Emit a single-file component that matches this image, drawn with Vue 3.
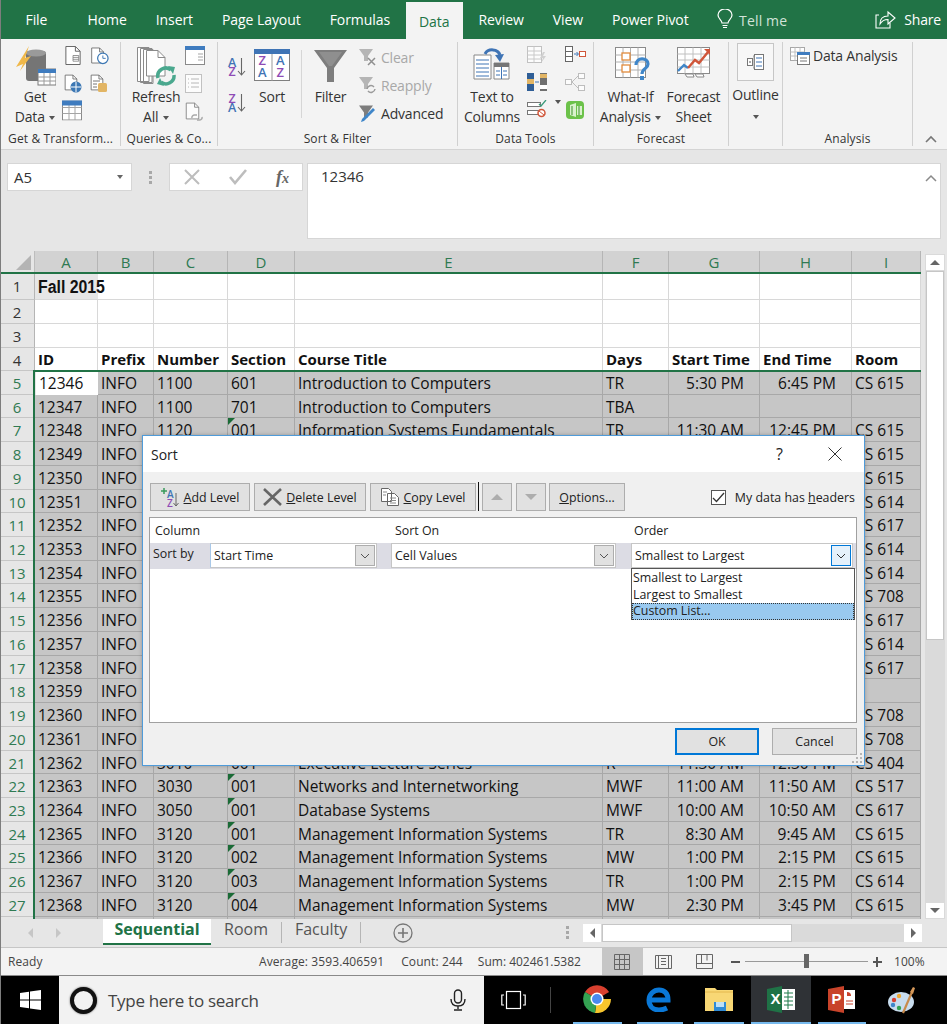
<template>
  <div class="app">
    <svg width="0" height="0" class="defs">
      <symbol id="doc" viewBox="0 0 18 20">
        <path d="M1.5 .5h10l5 5v14h-15z" fill="#fff" stroke="#5f5f5f" />
        <path d="M11.5 .5v5h5" fill="none" stroke="#5f5f5f" />
      </symbol>
      <symbol id="funnel" viewBox="0 0 18 18">
        <path d="M1 1h14l-5 7v5h-4v-5z" fill="currentColor" />
      </symbol>
      <symbol id="minitable" viewBox="0 0 20 20">
        <rect x=".5" y=".5" width="19" height="19" fill="#fff" stroke="#8a8a8a" />
        <path d="M.5 7h19M.5 13h19M7 .5v19M13 .5v19" stroke="#a5a5a5" fill="none" />
      </symbol>
    </svg>

    <!-- title / tabs -->
    <header class="tabs">
      <span class="tab file">File</span>
      <span class="tab">Home</span>
      <span class="tab">Insert</span>
      <span class="tab">Page Layout</span>
      <span class="tab">Formulas</span>
      <span class="tab active">Data</span>
      <span class="tab">Review</span>
      <span class="tab">View</span>
      <span class="tab">Power Pivot</span>
      <svg class="bulb" width="16" height="21" viewBox="0 0 16 21" fill="none" stroke="#fff" stroke-width="1.2">
        <path d="M5 14c0-3-4-4-4-8a7 6 0 0 1 14 0c0 4-4 5-4 8z" />
        <path d="M5.5 16.500h5M6 18.500h4" />
      </svg>
      <span class="tell">Tell me</span>
      <svg class="share-ic" width="21" height="19" viewBox="0 0 21 19" fill="none" stroke="#fff" stroke-width="1.1">
        <path d="M4 5H1v13h14v-5" />
        <path d="M5 14c0-5 3-8 8-8V2l7 6-7 6V9.500c-3 0-6 1-8 4.500z" />
      </svg>
      <span class="share">Share</span>
    </header>

    <!-- ribbon -->
    <section class="ribbon">
      <div class="grp g1">
        <div class="grp-body">
          <div class="big w42">
            <svg width="41" height="41" viewBox="0 0 41 41">
              <rect x="11" y="5" width="20" height="30" rx="3" fill="#757575" />
              <ellipse cx="21" cy="7" rx="10" ry="3.500" fill="#9a9a9a" />
              <path d="M14 0 1 21l7-3-3 7 11-15-6 2z" fill="#f0b849" />
              <rect x="23" y="23" width="18" height="16" fill="#fff" stroke="#7a7a7a" />
              <rect x="23" y="23" width="18" height="4" fill="#3f7cbf" />
              <path d="M23 31h18M23 35h18M29 27v12M35 27v12" stroke="#9a9a9a" />
            </svg>
            <span>Get</span>
            <span>Data <i class="caret"></i></span>
          </div>
          <div class="smalls g1-smalls">
            <svg width="18" height="19" viewBox="0 0 18 20"><use href="#doc" /><path d="M9 10h6v6H9zM9 12h6M9 14h6" fill="#fff" stroke="#777" stroke-width=".8" /></svg>
            <svg width="20" height="19" viewBox="0 0 20 20"><use href="#doc" width="15" height="20" /><circle cx="13" cy="13" r="5.500" fill="#fff" stroke="#3d78b4" stroke-width="1.300" /><path d="M13 10v3h3" fill="none" stroke="#3d78b4" /></svg>
            <svg width="18" height="20" viewBox="0 0 18 20"><use href="#doc" width="14" height="19" /><circle cx="12" cy="14" r="5.500" fill="#3d78b4" /><path d="M7 14h10M12 9v10" stroke="#fff" /></svg>
            <svg width="18" height="20" viewBox="0 0 18 20"><use href="#doc" width="14" height="19" /><rect x="8" y="10" width="9" height="9" rx="1.500" fill="#e2b564" /><path d="M3 8h7M3 11h4M3 14h4" stroke="#777" /></svg>
            <svg class="tbl" width="20" height="21" viewBox="0 0 20 20"><use href="#minitable" /><rect width="20" height="5" fill="#3f7cbf" /></svg>
          </div>
        </div>
        <div class="grp-label">Get &amp; Transform...</div>
      </div>

      <div class="grp g2">
        <div class="grp-body">
          <div class="big w50">
            <svg width="41" height="41" viewBox="0 0 41 41">
              <path d="M1.500 1.500H13v34H1.500zM4.500 2.500H16v34H4.500zM7.500 3.500H17v34H7.500z" fill="#fff" stroke="#8a8a8a" />
              <path d="M10.500 4.500H22l7 7V30H10.500z" fill="#fff" stroke="#8a8a8a" />
              <path d="M22 4.500v7h7" fill="none" stroke="#8a8a8a" />
              <path d="M22 32a8 8 0 0 1 13-8M38 29a8 8 0 0 1-13 7" fill="none" stroke="#4aa88e" stroke-width="3.500" />
              <path d="M32 20l7 1-2 7zM28 40l-7-2 3-6z" fill="#4aa88e" />
            </svg>
            <span>Refresh</span>
            <span>All <i class="caret"></i></span>
          </div>
          <div class="smalls g2-smalls">
            <svg width="20" height="19" viewBox="0 0 20 19"><rect x=".5" y=".5" width="19" height="18" fill="#fff" stroke="#8a8a8a" /><rect width="20" height="4" fill="#3f7cbf" /><path d="M13 8h5M13 11h5M13 14h5" stroke="#a5a5a5" /></svg>
            <svg class="dim" width="17" height="19" viewBox="0 0 17 19"><rect x=".5" y=".5" width="16" height="18" fill="#fff" stroke="#b5b5b5" /><path d="M6 5h8M6 9h8M6 13h8M3 5h1M3 9h1M3 13h1" stroke="#a8a8a8" /></svg>
            <svg class="dim" width="18" height="20" viewBox="0 0 18 20"><use href="#doc" width="15" height="18" /><path d="M7 16a2.500 2.500 0 0 1 3-3h2M17 15a2.500 2.500 0 0 1-3 3h-2" fill="none" stroke="#999" stroke-width="1.500" /></svg>
          </div>
        </div>
        <div class="grp-label">Queries &amp; Co...</div>
      </div>

      <div class="grp g3">
        <div class="grp-body">
          <div class="sort-col">
            <svg class="letters" width="18" height="20" viewBox="0 0 18 20">
              <text class="az"><tspan x="0" y="9.500" class="blue">A</tspan><tspan x=".5" y="19" class="purple">Z</tspan></text>
              <path d="M13.500 1v17M10 14l3.500 4 3.500-4" fill="none" stroke="#666" stroke-width="1.100" />
            </svg>
            <svg class="letters" width="18" height="20" viewBox="0 0 18 20">
              <text class="az"><tspan x=".5" y="9.500" class="purple">Z</tspan><tspan x="0" y="19" class="blue">A</tspan></text>
              <path d="M13.500 1v17M10 14l3.500 4 3.500-4" fill="none" stroke="#666" stroke-width="1.100" />
            </svg>
          </div>
          <div class="big w36 sortbtn">
            <svg class="letters" width="36" height="34" viewBox="0 0 36 34">
              <rect x=".5" y=".5" width="35" height="31" fill="#fff" stroke="#7f7f7f" />
              <rect width="36" height="5" fill="#3f74b5" />
              <path d="M18 5v27" stroke="#999" />
              <text class="az2"><tspan x="4.500" y="16" class="purple">Z</tspan><tspan x="4" y="28" class="blue">A</tspan></text>
              <text class="az2"><tspan x="22" y="16" class="blue">A</tspan><tspan x="22.500" y="28" class="purple">Z</tspan></text>
            </svg>
            <span>Sort</span>
          </div>
          <div class="vsep"></div>
          <div class="big w36 filterbtn">
            <svg width="33" height="34" viewBox="0 0 33 34">
              <path d="M0 1h33L20 19v14h-7V19z" fill="#7d7d7d" />
              <path d="M5 3h23L18 17h-3z" fill="#8f8f8f" />
            </svg>
            <span>Filter</span>
          </div>
          <div class="filter-small">
            <div class="fs off">
              <svg width="18" height="18" viewBox="0 0 18 18"><use href="#funnel" /><path d="M10 10l7 7M17 10l-7 7" stroke="#8f8f8f" stroke-width="1.500" /></svg>
              <span>Clear</span>
            </div>
            <div class="fs off">
              <svg width="18" height="18" viewBox="0 0 18 18"><use href="#funnel" /><path d="M9 13a4 4 0 0 1 7-2M17 13a4 4 0 0 1-7 2" fill="none" stroke="#9a9a9a" stroke-width="1.500" /></svg>
              <span>Reapply</span>
            </div>
            <div class="fs on">
              <svg width="18" height="19" viewBox="0 0 18 19"><use href="#funnel" /><path d="M17 6L6 17l-3 1 1-3L15 4z" fill="#3f86c9" /></svg>
              <span>Advanced</span>
            </div>
          </div>
        </div>
        <div class="grp-label">Sort &amp; Filter</div>
      </div>

      <div class="grp g4">
        <div class="grp-body">
          <div class="big w58">
            <svg width="38" height="41" viewBox="0 0 38 41">
              <path d="M1 9h17v24H1z" fill="#fff" stroke="#888" />
              <path d="M3 14h13M3 18h13M3 22h13M3 26h13M3 30h13" stroke="#3f74b5" />
              <path d="M21 17h15v16H21z" fill="#fff" stroke="#888" />
              <rect x="21" y="17" width="15" height="4" fill="#777" />
              <path d="M28.500 21v12M23 25h4M23 29h4M30 25h4M30 29h4" stroke="#3f74b5" />
              <path d="M12 8a8 7 0 0 1 15 1" fill="none" stroke="#3f74b5" stroke-width="3" />
              <path d="M22 9l9-1-4 8z" fill="#3f74b5" />
            </svg>
            <span>Text to</span>
            <span>Columns</span>
          </div>
          <div class="smalls g4-smalls">
            <svg class="dim" width="20" height="18" viewBox="0 0 20 18"><rect x=".5" y=".5" width="14" height="16" fill="#fff" stroke="#b5b5b5" /><path d="M.5 5h14M.5 9h14M.5 13h14M7 .5v16" stroke="#c0c0c0" /><path d="M16 6l-3 6h3l-2 5 5-7h-3l2-4z" fill="#c8c8c8" /></svg>
            <svg width="21" height="16" viewBox="0 0 21 16"><rect x=".5" y=".5" width="7" height="15" fill="#fff" stroke="#666" /><path d="M.5 5.500h7M.5 10.500h7" stroke="#666" /><rect x="14.500" y="5.500" width="6" height="5" fill="#fff" stroke="#d0563a" /><path d="M9 8h4M11.500 6l2 2-2 2" fill="none" stroke="#3f74b5" /></svg>
            <svg width="20" height="18" viewBox="0 0 20 18"><rect width="7" height="18" fill="#2f5e96" /><rect y="6" width="7" height="5" fill="#e2b564" /><rect x="13" width="7" height="18" fill="#6f6f6f" /><rect x="13" y="1" width="7" height="4" fill="#e2b564" /><rect x="13" y="12" width="7" height="4" fill="#fff" /><path d="M8 9h4" stroke="#3f74b5" /></svg>
            <svg class="dim" width="20" height="18" viewBox="0 0 20 18"><rect x=".5" y="6.500" width="6" height="5" fill="#fff" stroke="#b0b0b0" /><rect x="13.500" y=".5" width="6" height="5" fill="#fff" stroke="#b0b0b0" /><rect x="13.500" y="12.500" width="6" height="5" fill="#fff" stroke="#b0b0b0" /><path d="M7 9l6-6M7 9l6 6" stroke="#b0b0b0" /></svg>
            <div class="valid">
              <svg width="20" height="18" viewBox="0 0 20 18"><rect x=".5" y="2.500" width="13" height="4" fill="#fff" stroke="#777" /><rect x=".5" y="10.500" width="13" height="4" fill="#fff" stroke="#777" /><path d="M12 4l2 2 5-6" fill="none" stroke="#3b9a7a" stroke-width="1.300" /><circle cx="14.500" cy="13" r="3.500" fill="#fff" stroke="#d0563a" stroke-width="1.500" /><path d="M12 11l5 4" stroke="#d0563a" /></svg>
              <i class="caret"></i>
            </div>
            <svg width="20" height="20" viewBox="0 0 20 20"><rect x="1" y="1" width="18" height="18" rx="4" fill="#6cc24a" /><path d="M5 5l6-2v14l-6-2zM12 6h5v9h-5z" fill="#d9f2cc" /><path d="M7 6v9M14 6v9" stroke="#3a8f2a" /></svg>
          </div>
        </div>
        <div class="grp-label">Data Tools</div>
      </div>

      <div class="grp g5">
        <div class="grp-body">
          <div class="big w63">
            <svg class="whatif" width="36" height="41" viewBox="0 0 36 41">
              <g transform="translate(0 1)">
                <rect x=".5" y=".5" width="30" height="30" fill="#fff" stroke="#8a8a8a" />
                <path d="M.5 8h30M.5 15h30M.5 23h30M8 .5v30M15.500 .5v30M23 .5v30" stroke="#b0b0b0" />
                <rect x="7" y="6" width="8" height="7" fill="#fff" stroke="#e08a3c" stroke-width="1.300" />
                <rect x="7" y="18" width="8" height="7" fill="#fff" stroke="#e08a3c" stroke-width="1.300" />
                <path d="M21 18c0-8 12-8 12-1 0 5-6 4-6 10" fill="none" stroke="#3f86c9" stroke-width="3.200" />
                <rect x="25" y="29" width="4" height="4" fill="#3f86c9" />
              </g>
            </svg>
            <span>What-If</span>
            <span>Analysis <i class="caret"></i></span>
          </div>
          <div class="big w55">
            <svg width="34" height="41" viewBox="0 0 34 41">
              <g transform="translate(0 1)">
                <rect x=".5" y=".5" width="32" height="26" fill="#fff" stroke="#8a8a8a" />
                <path d="M.5 7h32M.5 13h32M.5 20h32M8 .5v26M16 .5v26M24 .5v26" stroke="#c0c0c0" />
                <path d="M8 27l2 3h7l-1-3zM18 27l2 3h7l-1-3z" fill="#fff" stroke="#8a8a8a" />
                <path d="M1 24l6-6 4 3" fill="none" stroke="#3f86c9" stroke-width="2.400" />
                <path d="M11 21l7-8 4 3 9-11" fill="none" stroke="#d0563a" stroke-width="2.400" />
                <path d="M27 2h6v6z" fill="#d0563a" />
              </g>
            </svg>
            <span>Forecast</span>
            <span>Sheet</span>
          </div>
        </div>
        <div class="grp-label">Forecast</div>
      </div>

      <div class="grp g6">
        <div class="grp-body outline">
          <div class="outline-box">
            <svg width="17" height="16" viewBox="0 0 17 16"><rect x=".5" y="4.500" width="5" height="7" fill="#fff" stroke="#777" /><path d="M2 8h2" stroke="#555" /><rect x="7.500" y=".5" width="9" height="15" fill="#fff" stroke="#777" /><path d="M9 4h6M9 8h6M9 12h6" stroke="#3f74b5" /><path d="M6 2h1v12H6" fill="none" stroke="#999" /></svg>
          </div>
          <span>Outline</span>
          <i class="caret mt"></i>
        </div>
        <div class="grp-label">&nbsp;</div>
      </div>

      <div class="grp g7">
        <div class="grp-body">
          <div class="analysis">
            <svg width="20" height="18" viewBox="0 0 20 18"><rect x=".5" y=".5" width="14" height="13" fill="#fff" stroke="#a8a8a8" /><path d="M.5 5h14M.5 9h14M5 .5v13M10 .5v13" stroke="#c0c0c0" /><rect x="7.500" y="5.500" width="12" height="12" fill="#fff" stroke="#777" /><rect x="7" y="5" width="13" height="3" fill="#3f7cbf" /><path d="M10 11h7M10 14h7" stroke="#777" /></svg>
            <span>Data Analysis</span>
          </div>
        </div>
        <div class="grp-label">Analysis</div>
      </div>

      <svg class="collapse" width="12" height="8" viewBox="0 0 12 8" fill="none" stroke="#777" stroke-width="1.600"><path d="M1 7l5-5 5 5" /></svg>
    </section>

    <!-- formula bar -->
    <section class="fbar">
      <div class="namebox">
        <span>A5</span>
        <i class="caret dark"></i>
      </div>
      <div class="fdots"><i></i><i></i><i></i></div>
      <div class="fxbox">
        <svg width="16" height="16" viewBox="0 0 16 16" stroke="#bdbdbd" stroke-width="2" fill="none"><path d="M1 1l14 14M15 1L1 15" /></svg>
        <svg width="18" height="16" viewBox="0 0 18 16" stroke="#bdbdbd" stroke-width="2.600" fill="none"><path d="M1 8l5 6L17 1" /></svg>
        <span class="fx">f<small>x</small></span>
      </div>
      <div class="finput">
        <span>12346</span>
        <svg class="fchev" width="12" height="8" viewBox="0 0 12 8" fill="none" stroke="#8a8a8a" stroke-width="1.500"><path d="M1 7l5-5 5 5" /></svg>
      </div>
    </section>

    <!-- sheet -->
    <section class="sheet">
      <div class="grid">
        <div class="row colhead">
          <div class="corner"><i></i></div>
          <div v-for="c in columns" :key="c" class="ch">{{ c }}</div>
        </div>
        <div class="row r1">
          <div class="rh">1</div>
          <div class="cell title"><span>Fall 2015</span></div>
          <div v-for="n in 8" :key="n" class="cell"></div>
        </div>
        <div class="row r2">
          <div class="rh">2</div>
          <div v-for="n in 9" :key="n" class="cell"></div>
        </div>
        <div class="row r2">
          <div class="rh">3</div>
          <div v-for="n in 9" :key="n" class="cell"></div>
        </div>
        <div class="row r4">
          <div class="rh">4</div>
          <div v-for="h in headings" :key="h" class="cell bold">{{ h }}</div>
        </div>
        <div v-for="(r, i) in rows" :key="i" class="row sel">
          <div class="rh green">{{ i + 5 }}</div>
          <div
            v-for="(v, j) in r"
            :key="j"
            class="cell"
            :class="{ active: i === 0 && j === 0, num: j === 6 || j === 7, flag: j === 3 && i >= 2 }"
          >{{ v }}</div>
        </div>
        <div class="row sel">
          <div class="rh"></div>
          <div v-for="n in 9" :key="n" class="cell"></div>
        </div>
        <div class="selline"></div>
      </div>
      <div class="vscroll">
        <div class="sbtn"><i class="tri up"></i></div>
        <div class="vthumb"></div>
        <div class="sbtn end"><i class="tri down"></i></div>
      </div>
    </section>

    <!-- sheet tabs -->
    <section class="sheettabs">
      <div class="nav"><i class="tri left"></i><i class="tri right"></i></div>
      <div class="stab on">Sequential</div>
      <div class="stab">Room</div>
      <div class="stab sep">Faculty</div>
      <div class="plus">
        <svg width="20" height="20" viewBox="0 0 20 20" fill="none" stroke="#777" stroke-width="1.300"><circle cx="10" cy="10" r="9" /><path d="M10 5v10M5 10h10" stroke-width="1.600" /></svg>
      </div>
      <div class="fdots tabdots"><i></i><i></i><i></i></div>
      <div class="hscroll">
        <div class="hbtn"><i class="tri left dark"></i></div>
        <div class="hthumb"></div>
        <div class="hbtn end"><i class="tri right dark"></i></div>
      </div>
    </section>

    <!-- status -->
    <footer class="status">
      <span class="ready">Ready</span>
      <span class="stat avg">Average: 3593.406591</span>
      <span class="stat cnt">Count: 244</span>
      <span class="stat sum">Sum: 402461.5382</span>
      <div class="view on">
        <svg width="16" height="16" viewBox="0 0 16 16" fill="none" stroke="#666"><path d="M.5 .5h15v15H.5zM.5 5.500h15M.5 10.500h15M5.500 .5v15M10.500 .5v15" /></svg>
      </div>
      <div class="view">
        <svg width="17" height="14" viewBox="0 0 17 14" fill="none" stroke="#666"><path d="M.5 .5h16v13H.5zM3.500 .5v13M13.500 .5v13M6 3.500h5M6 6.500h5M6 9.500h5" /></svg>
      </div>
      <div class="view">
        <svg width="17" height="15" viewBox="0 0 17 15" fill="none" stroke="#666"><path d="M.5 .5h16v14H.5zM.5 9.500h16M5.500 .5v9M11 .5v6" /></svg>
      </div>
      <div class="zoom">
        <i class="zbtn"></i>
        <div class="slider"><i></i></div>
        <i class="zbtn plusb"></i>
      </div>
      <span class="pct">100%</span>
    </footer>

    <!-- taskbar -->
    <nav class="taskbar">
      <div class="start">
        <svg width="21" height="20" viewBox="0 0 21 20" fill="#fff"><path d="M0 3l9-1.300V9.500H0zM10 1.500L21 0v9.500H10zM0 10.500h9v7.800L0 17zM10 10.500h11V20l-11-1.500z" /></svg>
      </div>
      <div class="search">
        <i class="cortana"></i>
        <span>Type here to search</span>
        <svg class="mic" width="16" height="22" viewBox="0 0 16 22" fill="none" stroke="#222" stroke-width="1.400"><rect x="4.500" y="1" width="7" height="13" rx="3.500" /><path d="M1 10c0 5 3 7 7 7s7-2 7-7M8 17v3M4 21h8" /></svg>
      </div>
      <div class="taskview">
        <svg width="25" height="20" viewBox="0 0 25 20" fill="none" stroke="#fff" stroke-width="1.200"><rect x="5.500" y="1.500" width="14" height="17" /><path d="M3 5H.8v10H3M22 5h2.200v10H22" /></svg>
      </div>
      <div class="tsep"></div>
      <div class="app-ic chrome">
        <svg width="28" height="28" viewBox="0 0 28 28">
          <path d="M14 14L2 7.100A14 14 0 0 1 26.100 7z" fill="#d8402f" />
          <path d="M14 14h14A14 14 0 0 1 12 27.900z" fill="#f7c52d" />
          <path d="M14 14L12 27.900A14 14 0 0 1 2 7.100z" fill="#34a252" />
          <circle cx="14" cy="14" r="6.500" fill="#fff" />
          <circle cx="14" cy="14" r="5" fill="#4a8af0" />
        </svg>
      </div>
      <div class="app-ic edge">
        <svg width="25" height="26" viewBox="0 0 25 26" fill="none" stroke="#0a78d7" stroke-width="5">
          <path d="M3 14h19c0-7-4-10-9-10S3 8 3 14c0 7 5 10 10 10 3 0 6-1 8-2" />
        </svg>
      </div>
      <div class="app-ic folder">
        <svg width="28" height="23" viewBox="0 0 28 23">
          <path d="M0 0h10l2 2h16v21H0z" fill="#f8d775" />
          <path d="M0 4h28" stroke="#e4b84f" />
          <rect x="9" y="14" width="12" height="9" fill="#2f8ad6" />
          <rect x="11" y="14" width="8" height="5" fill="#bfe0f7" />
        </svg>
      </div>
      <div class="app-ic xl">
        <svg width="28" height="27" viewBox="0 0 28 27">
          <rect x="14" y="3" width="14" height="21" fill="#fff" />
          <path d="M17 7h9M17 11h9M17 15h9M17 19h9M21 4v19" stroke="#1f7a4a" />
          <path d="M0 3l15-3v27L0 24z" fill="#1f7246" />
          <text x="3.500" y="18" class="logo-t">X</text>
        </svg>
      </div>
      <div class="app-ic ppt">
        <svg width="28" height="27" viewBox="0 0 28 27">
          <rect x="14" y="4" width="13" height="19" fill="#fff" />
          <path d="M18 15h7M18 18h7" stroke="#c8432a" />
          <path d="M19 6a4 4 0 0 1 4 4h-4z" fill="#c8432a" />
          <path d="M0 3l16-3v27L0 24z" fill="#c8432a" />
          <text x="3.500" y="18" class="logo-t">P</text>
        </svg>
      </div>
      <div class="app-ic paint">
        <svg width="28" height="28" viewBox="0 0 28 28">
          <ellipse cx="13" cy="16" rx="13" ry="10" fill="#c8dcee" />
          <circle cx="6" cy="14" r="2.200" fill="#d8402f" />
          <circle cx="11" cy="10" r="2.200" fill="#f0a830" />
          <circle cx="5" cy="19" r="2.200" fill="#3f86c9" />
          <circle cx="11" cy="22" r="2.200" fill="#34a252" />
          <path d="M15 27L24 6" stroke="#c88a4a" stroke-width="2.200" />
          <path d="M22 6l3-5 2 1-2 6z" fill="#d89a5a" />
        </svg>
      </div>
    </nav>

    <!-- sort dialog -->
    <div class="dialog">
      <div class="dlg-title">
        <span class="dlg-name">Sort</span>
        <span class="help">?</span>
        <svg class="close" width="14" height="14" viewBox="0 0 14 14" stroke="#333" fill="none"><path d="M.5 .5l13 13M13.500 .5l-13 13" /></svg>
      </div>
      <div class="dlg-body">
        <div class="toolbar">
          <button class="btn add">
            <svg class="letters" width="20" height="20" viewBox="0 0 20 20">
              <path d="M0 4h6M3 1v6" stroke="#3a9a5c" stroke-width="1.500" />
              <text class="az3"><tspan x="6" y="11" class="blue">A</tspan><tspan x="6" y="20" class="purple">Z</tspan></text>
              <path d="M15 6v13M12.500 16l2.500 3 2.500-3" fill="none" stroke="#666" />
            </svg>
            <span><u>A</u>dd Level</span>
          </button>
          <button class="btn del">
            <svg width="20" height="18" viewBox="0 0 20 18" stroke="#666" stroke-width="2.600"><path d="M1 1l17 16M18 1L1 17" /></svg>
            <span><u>D</u>elete Level</span>
          </button>
          <button class="btn copy">
            <svg width="18" height="18" viewBox="0 0 18 18" fill="#fff" stroke="#666"><path d="M.5 .5h7l3 3v10H.5zM6.500 5.500h7l4 4v8h-11z" /><path d="M2 4h4M2 7h3M9 10h6M9 12.500h6M9 15h6" stroke="#888" /></svg>
            <span><u>C</u>opy Level</span>
          </button>
          <i class="bar"></i>
          <button class="btn arrow"><i class="tri up big-tri"></i></button>
          <button class="btn arrow"><i class="tri down big-tri"></i></button>
          <button class="btn opts"><span><u>O</u>ptions...</span></button>
          <label class="headers">
            <span class="check">
              <svg width="13" height="11" viewBox="0 0 13 11" fill="none" stroke="#333" stroke-width="1.300"><path d="M1 6l3.500 3.500L12 1" /></svg>
            </span>
            <span>My data has <u>h</u>eaders</span>
          </label>
        </div>

        <div class="levels">
          <div class="lv-head">
            <span>Column</span>
            <span>Sort On</span>
            <span>Order</span>
          </div>
          <div class="lv-row">
            <div class="lv-first">
              <span class="sortby">Sort by</span>
              <div class="combo first">
                <span>Start Time</span>
                <i class="drop"><svg width="10" height="6" viewBox="0 0 10 6" fill="none" stroke="#555"><path d="M1 1l4 4 4-4" /></svg></i>
              </div>
            </div>
            <div class="lv-second">
              <div class="combo">
                <span>Cell Values</span>
                <i class="drop"><svg width="10" height="6" viewBox="0 0 10 6" fill="none" stroke="#555"><path d="M1 1l4 4 4-4" /></svg></i>
              </div>
            </div>
            <div class="lv-third">
              <div class="combo open">
                <span>Smallest to Largest</span>
                <i class="drop"><svg width="10" height="6" viewBox="0 0 10 6" fill="none" stroke="#333"><path d="M1 1l4 4 4-4" /></svg></i>
              </div>
              <ul class="menu">
                <li>Smallest to Largest</li>
                <li>Largest to Smallest</li>
                <li class="hl">Custom List...</li>
              </ul>
            </div>
          </div>
        </div>

        <div class="dlg-foot">
          <button class="btn ok">OK</button>
          <button class="btn cancel">Cancel</button>
        </div>
      </div>
      <svg class="grip" width="12" height="11" viewBox="0 0 12 11" fill="#b5b5b5">
        <path d="M9 0h2v2H9zM5 4h2v2H5zM9 4h2v2H9zM1 8h2v2H1zM5 8h2v2H5zM9 8h2v2H9z" />
      </svg>
    </div>
  </div>
</template>

<script setup>
const columns = ['A', 'B', 'C', 'D', 'E', 'F', 'G', 'H', 'I']
const headings = ['ID', 'Prefix', 'Number', 'Section', 'Course Title', 'Days', 'Start Time', 'End Time', 'Room']

const mis = 'Management Information Systems'

// rows behind the dialog only show id, prefix and room
const hidden = (room) => ['', '', '', '', '', '', room]

const tail = [
  ['1100', '601', 'Introduction to Computers', 'TR', '5:30 PM', '6:45 PM', 'CS 615'],
  ['1100', '701', 'Introduction to Computers', 'TBA', '', '', ''],
  ['1120', '001', 'Information Systems Fundamentals', 'TR', '11:30 AM', '12:45 PM', 'CS 615'],
  hidden('CS 615'),
  hidden('CS 615'),
  hidden('CS 614'),
  hidden('CS 617'),
  hidden('CS 614'),
  hidden('CS 614'),
  hidden('CS 708'),
  hidden('CS 617'),
  hidden('CS 614'),
  hidden('CS 617'),
  hidden(''),
  hidden('CS 708'),
  hidden('CS 708'),
  ['3010', '001', 'Executive Lecture Series', 'R', '11:30 AM', '12:30 PM', 'CS 404'],
  ['3030', '001', 'Networks and Internetworking', 'MWF', '11:00 AM', '11:50 AM', 'CS 517'],
  ['3050', '001', 'Database Systems', 'MWF', '10:00 AM', '10:50 AM', 'CS 617'],
  ['3120', '001', mis, 'TR', '8:30 AM', '9:45 AM', 'CS 615'],
  ['3120', '002', mis, 'MW', '1:00 PM', '2:15 PM', 'CS 615'],
  ['3120', '003', mis, 'TR', '1:00 PM', '2:15 PM', 'CS 614'],
  ['3120', '004', mis, 'MW', '2:30 PM', '3:45 PM', 'CS 615']
]

const rows = tail.map((r, i) => [String(12346 + i), 'INFO', ...r])
</script>

<style>
html, body { margin: 0; background: #e6e6e6; }
</style>

<style scoped>
.app {
  position: relative;
  width: 947px;
  height: 1024px;
  overflow: hidden;
  display: flex;
  flex-direction: column;
  font-family: "Open Sans", "Noto Sans", sans-serif;
  color: #333;
  background: #e6e6e6;
  border-left: 1px solid #7d7d7d;
  box-sizing: border-box;
}
.defs { position: absolute; }
svg { display: block; flex: none; }
.letters { overflow: visible; }

/* tabs */
.tabs {
  height: 39px;
  flex: none;
  background: #217346;
  display: flex;
  align-items: flex-end;
  color: #fff;
  font-size: 14px;
  padding-left: 10px;
}
.tab {
  padding: 0 14.5px;
  height: 38px;
  line-height: 38px;
  letter-spacing: -0.07px;
}
.tab.file { margin-right: 11px; }
.tab.active {
  background: #f3f3f3;
  color: #217346;
  height: 37px;
  line-height: 40px;
  padding: 0 13.5px;
  margin: 0 1px;
}
.bulb { margin: 0 6px 9px 14px; }
.tell { height: 38px; line-height: 40px; color: #d2e3d9; letter-spacing: 0.15px; }
.share-ic { margin: 0 8px 10px auto; }
.share { height: 38px; line-height: 38px; margin-right: 6px; letter-spacing: -0.2px; }

/* ribbon */
.ribbon {
  height: 111px;
  flex: none;
  background: #f3f3f3;
  border-bottom: 1px solid #d4d4d4;
  box-sizing: border-box;
  display: flex;
  padding-top: 3px;
  position: relative;
  font-size: 14px;
  letter-spacing: -0.2px;
}
.grp {
  display: flex;
  flex-direction: column;
  border-right: 1px solid #d0d0d0;
  height: 104px;
  box-sizing: border-box;
  position: relative;
}
.grp-body { height: 86px; display: flex; flex: none; }
.grp-label {
  font-size: 12px;
  text-align: center;
  height: 18px;
  line-height: 18px;
  white-space: nowrap;
  letter-spacing: 0.12px;
  margin-top: 2px;
}
.g1 { width: 120px; }
.g2 { width: 97px; }
.g3 { width: 240px; }
.g4 { width: 136px; }
.g5 { width: 135px; }
.g6 { width: 54px; }
.g7 { width: 130px; }

.big {
  display: flex;
  flex-direction: column;
  align-items: center;
  padding-top: 4px;
  line-height: 20px;
  white-space: nowrap;
  flex: none;
}
.whatif { margin-left: 4px; }
.w42 { width: 42px; margin-left: 13px; }
.w50 { width: 50px; margin-left: 10px; }
.w36 { width: 36px; }
.w58 { width: 58px; margin-left: 5px; }
.w63 { width: 63px; margin-left: 5px; }
.w55 { width: 55px; margin-left: 4px; }
.caret {
  display: inline-block;
  width: 0;
  height: 0;
  border: 3.5px solid transparent;
  border-top: 4px solid #555;
  border-bottom: 0;
  vertical-align: 2px;
  margin-left: 1px;
}
.caret.dark { border-top-color: #666; }
.caret.mt { margin-top: 10px; }

.smalls { display: grid; align-content: start; padding-top: 4px; }
.g1-smalls {
  margin-left: 8px;
  grid-template-columns: 26px 26px;
  grid-auto-rows: 27px;
}
.tbl { margin-left: -2px; }
.g2-smalls {
  margin-left: 4px;
  grid-template-columns: 22px;
  grid-auto-rows: 28px;
}
.dim { opacity: .8; }
.g4-smalls {
  margin-left: 6px;
  grid-template-columns: 38px 22px;
  grid-auto-rows: 27px;
}
.valid { display: flex; align-items: flex-start; gap: 7px; }

.sort-col {
  width: 20px;
  margin-left: 10px;
  padding-top: 15px;
  display: flex;
  flex-direction: column;
  gap: 16px;
  flex: none;
}
.az { font: 600 12.5px "Open Sans", sans-serif; }
.az2 { font: 600 13px "Open Sans", sans-serif; }
.az3 { font: 600 10px "Open Sans", sans-serif; }
.blue { fill: #3f74b5; }
.purple { fill: #8e4bb5; }
.sortbtn { margin-left: 6px; padding-top: 7px; }
.sortbtn svg, .filterbtn svg { margin-bottom: 4px; }
.vsep { width: 1px; height: 68px; background: #d6d6d6; margin: 8px 12px 0 11px; flex: none; }
.filterbtn { padding-top: 7px; width: 33px; }
.filter-small {
  margin-left: 11px;
  padding-top: 1px;
  display: flex;
  flex-direction: column;
}
.fs { display: flex; align-items: center; height: 28px; gap: 5px; }
.off { color: #a8a8a8; }
.off svg { color: #b5b5b5; }
.on svg { color: #7d7d7d; }

.outline {
  flex-direction: column;
  align-items: center;
  line-height: 20px;
}
.outline-box {
  width: 37px;
  height: 38px;
  margin: 1px 0 4px;
  background: #f7f7f7;
  border: 1px solid #c6c6c6;
  box-sizing: border-box;
  display: flex;
  align-items: center;
  justify-content: center;
}
.analysis { display: flex; gap: 3px; margin: 4px 0 0 7px; align-items: center; align-self: flex-start; white-space: nowrap; }
.collapse { position: absolute; right: 10px; top: 96px; }

/* formula bar */
.fbar {
  height: 101px;
  flex: none;
  display: flex;
  align-items: flex-start;
  padding: 13px 0 0 6px;
  box-sizing: border-box;
  font-size: 15px;
}
.namebox {
  width: 125px;
  height: 28px;
  background: #fff;
  border: 1px solid #d6d6d6;
  box-sizing: border-box;
  display: flex;
  align-items: center;
  justify-content: space-between;
  padding: 0 8px 0 6px;
}
.fdots {
  display: flex;
  flex-direction: column;
  gap: 2px;
  margin: 8px 17px 0 17px;
}
.fdots i { width: 3px; height: 3px; background: #a8a8a8; display: block; }
.fxbox {
  width: 134px;
  height: 28px;
  background: #fff;
  border: 1px solid #d6d6d6;
  box-sizing: border-box;
  display: flex;
  align-items: center;
  padding: 0 13px 0 14px;
  justify-content: space-between;
}
.fx { font: italic 700 18px "Liberation Serif", serif; color: #666; }
.fx small { font-size: 14px; }
.finput {
  width: 634px;
  height: 76px;
  margin-left: 4px;
  background: #fff;
  border: 1px solid #d6d6d6;
  box-sizing: border-box;
  padding: 2px 13px;
  position: relative;
}
.fchev { position: absolute; right: 3px; top: 10px; }

/* sheet */
.sheet { height: 668px; flex: none; display: flex; background: #e6e6e6; }
.grid { width: 920px; height: 668px; overflow: hidden; position: relative; flex: none; }
.row {
  display: grid;
  grid-template-columns: 34px 63px 56px 74px 67px 308px 66px 91px 92px 69px;
  grid-template-rows: 100%;
  height: 23.73px;
  font-size: 15.5px;
  color: #111;
}
.colhead { height: 23px; background: #d2d2d2; border-bottom: 2px solid #217346; box-sizing: border-box; color: #2f7a52; }
.corner { background: #e6e6e6; position: relative; border-right: 1px solid #bdbdbd; }
.corner i {
  position: absolute;
  right: 3px;
  bottom: 2px;
  border-left: 15px solid transparent;
  border-bottom: 15px solid #b4b4b4;
}
.ch {
  text-align: center;
  line-height: 22px;
  border-right: 1px solid #b5b5b5;
  font-size: 15px;
}
.r1 { height: 26px; }
.r2 { height: 24px; }
.r4 { height: 23px; }
.rh {
  background: #e6e6e6;
  border-right: 1px solid #b5b5b5;
  border-bottom: 1px solid #c6c6c6;
  text-align: center;
  color: #333;
  font-size: 15px;
  line-height: 24px;
  box-sizing: border-box;
  padding-right: 1px;
}
.rh.green { color: #2f7a52; }
.cell {
  background: #fff;
  border-right: 1px solid #d8d8d8;
  border-bottom: 1px solid #d8d8d8;
  box-sizing: border-box;
  padding-left: 3px;
  line-height: 25px;
  white-space: nowrap;
  position: relative;
}
.title { border-right: 0; z-index: 1; background: transparent; }
.title span {
  display: inline-block;
  font: 700 18px/27px "Liberation Sans", sans-serif;
  transform: scaleX(.88);
  transform-origin: left center;
}
.bold { font-weight: 700; font-size: 15px; line-height: 22px; }
.sel .cell { background: #c6c6c6; border-color: #a8a8a8; }
.sel .cell.active { background: #fff; border-color: #fff; margin-left: 1px; }
.sel .num { text-align: right; padding-right: 15px; padding-left: 0; }
.flag::before {
  content: "";
  position: absolute;
  left: 0;
  top: 0;
  border-top: 7px solid #1a6b36;
  border-right: 7px solid transparent;
}
.selline {
  position: absolute;
  left: 32px;
  top: 119px;
  right: 0;
  bottom: 0;
  border-top: 2px solid #217346;
  border-left: 2px solid #217346;
  pointer-events: none;
}
.vscroll {
  width: 20px;
  margin: 3px 0 0 4px;
  display: flex;
  flex-direction: column;
  background: #dadada;
  flex: none;
}
.sbtn {
  height: 17px;
  background: #fff;
  display: flex;
  align-items: center;
  justify-content: center;
  flex: none;
  border: 1px solid #dadada;
  box-sizing: border-box;
}
.sbtn.end { margin-top: auto; }
.vthumb { height: 369px; background: #fff; border: 1px solid #c6c6c6; box-sizing: border-box; margin: 0 1px; }
.tri { display: block; width: 0; height: 0; border: 5px solid transparent; }
.tri.up { border-top: 0; border-bottom: 5px solid #666; }
.tri.down { border-bottom: 0; border-top: 5px solid #666; }
.tri.left { border-left: 0; border-right: 5px solid #c6c6c6; }
.tri.right { border-right: 0; border-left: 5px solid #c6c6c6; }
.tri.left.dark { border-right-color: #666; }
.tri.right.dark { border-left-color: #666; }

/* sheet tabs */
.sheettabs {
  height: 29px;
  flex: none;
  display: flex;
  align-items: flex-start;
  border-bottom: 1px solid #c6c6c6;
  font-size: 16px;
  background: #e6e6e6;
  color: #555;
  box-sizing: border-box;
}
.nav { width: 102px; display: flex; gap: 23px; padding: 9px 0 0 27px; box-sizing: border-box; flex: none; }
.stab {
  height: 26px;
  line-height: 20px;
  padding: 0 12px;
  position: relative;
  flex: none;
}
.stab.on {
  width: 108px;
  box-sizing: border-box;
  padding: 0;
  text-align: center;
  background: #fff;
  color: #217346;
  font-weight: 700;
  border-bottom: 2px solid #217346;
  margin-right: 0;
}
.stab:not(.on) { border-right: 1px solid #b5b5b5; margin-top: 3px; height: 21px; line-height: 14px; padding: 0 13px; }
.plus { margin: 4px 0 0 32px; }
.tabdots { margin: 7px 0 0 153px; }
.hscroll {
  display: flex;
  margin: 5px 0 0 14px;
  width: 339px;
  height: 18px;
  background: #dadada;
  flex: none;
}
.hbtn { width: 18px; background: #fff; display: flex; align-items: center; justify-content: center; flex: none; }
.hbtn.end { margin-left: auto; }
.hthumb { width: 190px; background: #fff; border: 1px solid #c6c6c6; box-sizing: border-box; margin-left: 1px; }

/* status */
.status {
  height: 28px;
  flex: none;
  background: #f3f3f3;
  display: flex;
  align-items: center;
  font-size: 12px;
  color: #444;
  border-bottom: 1px solid #8a8a8a;
  box-sizing: border-box;
  white-space: nowrap;
  letter-spacing: 0.1px;
}
.ready { margin-left: 7px; width: 251px; flex: none; }
.stat { flex: none; }
.cnt { margin-left: 17px; }
.sum { margin-left: 15px; letter-spacing: 0; }
.view { width: 41px; height: 27px; display: flex; align-items: center; justify-content: center; flex: none; }
.view.on { background: #c6c6c6; margin-left: 21px; }
.zoom { display: flex; align-items: center; margin-left: 6px; flex: none; }
.zbtn { display: block; width: 9px; height: 2px; background: #555; position: relative; }
.zbtn.plusb::after { content: ""; position: absolute; left: 3.5px; top: -4px; width: 2px; height: 10px; background: #555; }
.slider { width: 123px; height: 1px; background: #999; margin: 0 5px; position: relative; }
.slider i { position: absolute; left: 59px; top: -7px; width: 5px; height: 14px; background: #666; }
.pct { margin-left: 12px; flex: none; }

/* taskbar */
.taskbar {
  height: 48px;
  flex: 1;
  background: #000;
  display: flex;
  align-items: center;
}
.start { width: 58px; display: flex; justify-content: center; flex: none; }
.search {
  width: 425px;
  height: 48px;
  background: #f2f2f2;
  display: flex;
  align-items: center;
  font-size: 17px;
  color: #444;
  flex: none;
  letter-spacing: -0.3px;
}
.cortana {
  width: 19px;
  height: 19px;
  margin: 0 11px;
  border: 4.5px solid #111;
  border-radius: 50%;
  background: #f2f2f2;
  box-shadow: 0 0 2px #555;
  flex: none;
  box-sizing: content-box;
}
.mic { margin-left: auto; margin-right: 18px; }
.taskview { width: 58px; display: flex; justify-content: center; flex: none; }
.tsep { width: 1px; height: 26px; background: #444; flex: none; margin-left: 8px; }
.app-ic {
  height: 48px;
  display: flex;
  align-items: center;
  justify-content: center;
  box-sizing: border-box;
  flex: none;
  border-bottom: 2px solid #76b9ed;
}
.chrome { width: 49px; margin-left: 22px; padding-right: 2px; }
.edge { width: 46px; margin-left: 15px; padding-right: 4px; }
.folder { width: 50px; margin-left: 11px; }
.xl { width: 60px; margin-left: 7px; background: #2f3236; }
.ppt { width: 48px; margin-left: 7px; }
.paint { width: 46px; margin-left: 13px; border-bottom: 0; }
.logo-t { font: 700 15px "Liberation Sans", sans-serif; fill: #fff; }

/* dialog */
.dialog {
  position: absolute;
  left: 141px;
  top: 435px;
  width: 723px;
  height: 331px;
  background: #f0f0f0;
  border: 1px solid #4f9bd9;
  box-sizing: border-box;
  display: flex;
  flex-direction: column;
  box-shadow: 0 0 4px rgba(0, 0, 0, .25);
  font-size: 12.4px;
  color: #222;
}
.dlg-title {
  height: 36px;
  background: #fff;
  display: flex;
  align-items: center;
  flex: none;
  padding: 0 22px 0 8px;
}
.dlg-name { font-size: 14px; }
.help { margin-left: auto; margin-right: 45px; font-size: 16px; }
.dlg-body { flex: 1; display: flex; flex-direction: column; padding: 11px 7px 0 6px; }
.toolbar { display: flex; height: 28px; flex: none; align-items: stretch; }
.btn {
  font: inherit;
  color: inherit;
  background: #e1e1e1;
  border: 1px solid #adadad;
  padding: 0;
  margin: 0;
  display: flex;
  align-items: center;
  justify-content: center;
  box-sizing: border-box;
  flex: none;
}
.add { width: 100px; margin-left: 1px; gap: 3px; }
.del { width: 112px; margin-left: 4px; gap: 3px; }
.copy { width: 106px; margin-left: 4px; gap: 5px; }
.bar { width: 1px; background: #111; margin: -1px 3px 0 2px; display: block; flex: none; }
.arrow { width: 30px; margin-right: 4px; }
.arrow + .arrow { margin-left: 0; }
.big-tri { border-width: 6px; }
.big-tri.up { border-bottom: 6px solid #adadad; border-top: 0; }
.big-tri.down { border-top: 6px solid #adadad; border-bottom: 0; }
.opts { width: 76px; margin-left: -1px; }
.headers { margin-left: auto; margin-right: 2px; display: flex; align-items: center; gap: 9px; }
.check {
  width: 15px;
  height: 15px;
  background: #fff;
  border: 1px solid #555;
  box-sizing: border-box;
  display: flex;
  align-items: center;
  justify-content: center;
}
.levels {
  margin-top: 6px;
  height: 206px;
  flex: none;
  background: #fff;
  border: 1px solid #a0a0a0;
  box-sizing: border-box;
  position: relative;
}
.lv-head {
  height: 25px;
  display: grid;
  grid-template-columns: 240px 239px 1fr;
  align-items: center;
}
.lv-head span { padding-left: 5px; }
.lv-row {
  height: 26px;
  display: grid;
  grid-template-columns: 241px 240px 1fr;
  background: #dcdce4;
}
.lv-first { display: flex; }
.sortby { width: 60px; padding: 2px 0 0 3px; flex: none; box-sizing: border-box; }
.lv-third { position: relative; }
.combo {
  height: 25px;
  width: 167px;
  background: #fff;
  border: 1px solid #c6c6c6;
  box-sizing: border-box;
  display: flex;
  align-items: center;
  justify-content: space-between;
  padding: 0 0 0 3px;
}
.lv-second .combo { width: 225px; }
.lv-third .combo { width: 222px; }
.combo.first { border-left: 1px solid #a9c8e8; }
.drop {
  width: 20px;
  height: 21px;
  margin-right: 1px;
  background: #e1e1e1;
  border: 1px solid #adadad;
  box-sizing: border-box;
  display: flex;
  align-items: center;
  justify-content: center;
}
.open .drop { background: #e5f1fb; border: 1px solid #0078d7; }
.menu {
  position: absolute;
  left: 0;
  top: 25px;
  width: 224px;
  margin: 0;
  padding: 1px 0 0;
  list-style: none;
  background: #fff;
  border: 1px solid #555;
  box-sizing: border-box;
  height: 52px;
}
.menu li { height: 16.500px; line-height: 16px; padding-left: 1px; }
.menu .hl { background: #99c9ef; outline: 1px dotted #333; outline-offset: -1px; }
.dlg-foot { display: flex; justify-content: flex-end; gap: 13px; margin-top: 5px; flex: none; }
.ok { width: 84px; height: 27px; border: 2px solid #0078d7; }
.cancel { width: 85px; height: 27px; }
.grip { position: absolute; right: 1px; bottom: 1px; }
</style>
